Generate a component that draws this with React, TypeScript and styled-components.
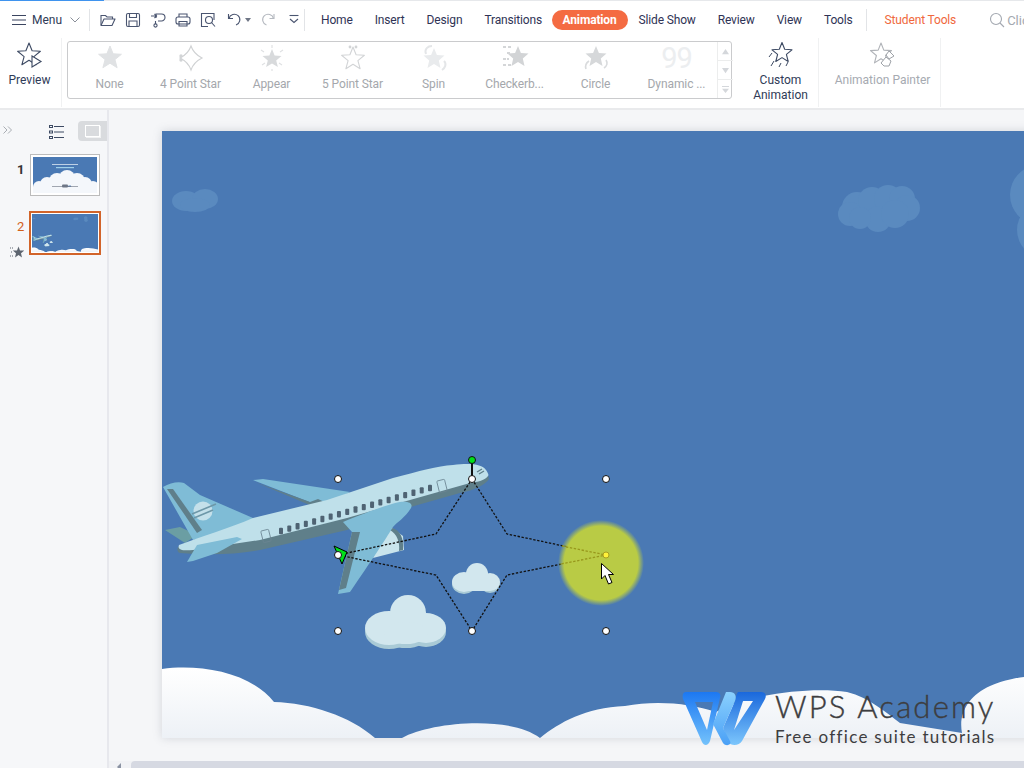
import React from 'react';
import styled, { createGlobalStyle } from 'styled-components';

const Global = createGlobalStyle`
  html, body { margin: 0; padding: 0; background: #f5f6f8; overflow: hidden; }
  #root { width: 1024px; height: 768px; }
`;

const Page = styled.div`
  width: 1024px; height: 768px; display: flex; flex-direction: column; overflow: hidden;
  font-family: Roboto, "Noto Sans", sans-serif; font-size: 12px; color: #2f3b57; background: #f5f6f8;
`;
const LoadStrip = styled.div`
  height: 2px; flex: none; background: linear-gradient(to right, #3f93ee 104px, #e6e8eb 104px);
  background-size: 100% 1px; background-repeat: no-repeat; background-color: #fff;
`;
const TopBar = styled.div`
  height: 36px; flex: none; background: #fff; display: flex; align-items: center; padding-left: 12px; white-space: nowrap;
  & > * { flex: none; }
`;
const MenuLabel = styled.span`
  margin-left: 6px; width: 38px; color: #2f3b57;
`;
const VRule = styled.div<{ $h?: number; $ml?: number; $mr?: number }>`
  width: 1px; height: ${p => p.$h ?? 22}px; background: #e2e4e7; flex: none;
  margin-left: ${p => p.$ml ?? 0}px; margin-right: ${p => p.$mr ?? 0}px;
`;
const QuickIcon = styled.svg<{ $w?: number; $mr?: number; $dim?: boolean }>`
  width: ${p => p.$w ?? 16}px; height: 16px; flex: none; margin-right: ${p => p.$mr ?? 9}px;
  fill: none; stroke: ${p => (p.$dim ? '#b5b9c0' : '#4a5570')}; stroke-width: 1.1;
`;
const UndoCaret = styled.svg`
  width: 8px; height: 4px; margin-right: 8px; fill: #6f7686;
`;
const Nav = styled.nav`
  display: flex; align-items: center; margin-left: 5px; letter-spacing: -0.15px;
`;
const NavItem = styled.span<{ $active?: boolean }>`
  height: 20px; line-height: 20px; border-radius: 10px; padding: 0 11px;
  margin-left: ${p => (p.$active ? -1.5 : 0)}px;
  background: ${p => (p.$active ? '#f46b42' : 'transparent')};
  color: ${p => (p.$active ? '#fff' : '#2f3355')}; font-weight: ${p => (p.$active ? 700 : 400)};
`;
const StudentTools = styled.span`
  color: #f0683c; margin-left: 18px; letter-spacing: -0.15px;
`;
const Search = styled.div`
  display: flex; align-items: center; gap: 2px; margin-left: 33px; color: #a3a8b0; font-size: 13px;
`;
const Ribbon = styled.div`
  height: 70px; flex: none; background: #fff; border-bottom: 2px solid #e9eaec; display: flex; align-items: stretch; box-sizing: content-box;
`;
const RibbonButton = styled.div<{ $w: number; $pl?: number; $pr?: number; $muted?: boolean }>`
  width: ${p => p.$w}px; flex: none; display: flex; flex-direction: column; align-items: center; text-align: center; line-height: 15px;
  color: ${p => (p.$muted ? '#a6aab1' : '#2f3b57')}; padding: 4px ${p => p.$pr ?? 0}px 0 ${p => p.$pl ?? 0}px; box-sizing: border-box; border-right: 1px solid #f0f1f2; height: 69px;
`;
const RibbonIcon = styled.svg`
  width: 28px; height: 28px; flex: none; margin-bottom: 3px;
`;
const Gallery = styled.div`
  width: 663px; height: 56px; flex: none; margin: 3px 5px 0 5px; border: 1px solid #cacbcd; border-radius: 3px; display: flex; background: #fff;
`;
const GalleryItems = styled.div`
  flex: 1; display: flex; padding-left: 1px; letter-spacing: -0.1px;
`;
const GalleryItem = styled.div`
  width: 81px; flex: none; display: flex; flex-direction: column; align-items: center; color: #a4a7ac; padding-top: 2px; line-height: 16px; white-space: nowrap;
`;
const GalleryIcon = styled.svg`
  width: 28px; height: 28px; flex: none; margin-bottom: 4px;
`;
const DynamicGlyph = styled.span`
  height: 28px; margin-bottom: 4px; font-size: 29px; line-height: 28px; color: #eceef0; letter-spacing: -1px;
`;
const GalleryScroll = styled.div`
  width: 15px; flex: none; border-left: 1px solid #eceded; display: flex; flex-direction: column;
`;
const ScrollCell = styled.div`
  flex: 1; display: flex; align-items: center; justify-content: center; border-bottom: 1px solid #eceded;
  &:last-child { border-bottom: none; }
`;
const Arrow = styled.svg`
  width: 7px; height: 7px; fill: #d4d7db;
`;
const Workspace = styled.div`
  flex: 1; display: flex; min-height: 0;
`;
const Sidebar = styled.aside`
  width: 107px; flex: none; border-right: 2px solid #e7e8ed; background: #f6f7f9; display: flex; flex-direction: column;
`;
const SideTabs = styled.div`
  height: 44px; flex: none; display: flex; align-items: flex-start; padding-top: 11px; box-sizing: border-box;
`;
const CollapseIcon = styled.svg`
  width: 10px; height: 8px; margin: 5px 0 0 3px; flex: none; fill: none; stroke: #a9adb3;
`;
const ListIcon = styled.svg`
  width: 15px; height: 14px; margin: 4px 0 0 36px; flex: none; fill: none; stroke: #3d4a63;
`;
const SideTab = styled.div`
  width: 30px; height: 20px; margin-left: 14px; background: #d9dbde; border-radius: 4px 0 0 4px; display: flex; align-items: center; justify-content: center;
`;
const TabFrame = styled.div`
  width: 13px; height: 10px; border: 1px solid #fff; box-shadow: 1px 1px 0 #f1f2f3;
`;
const ThumbRow = styled.div<{ $current?: boolean }>`
  position: relative; display: flex; height: ${p => (p.$current ? 44 : 42)}px; margin-bottom: ${p => (p.$current ? 0 : 15)}px;
  padding-left: ${p => (p.$current ? 29 : 30)}px;
`;
const ThumbNumber = styled.span<{ $current?: boolean }>`
  position: absolute; left: 17px; top: 7px; font-weight: ${p => (p.$current ? 400 : 700)}; font-size: 13px; line-height: 18px;
  color: ${p => (p.$current ? '#d2601a' : '#333')};
`;
const Thumb = styled.div<{ $current?: boolean }>`
  box-sizing: border-box; width: ${p => (p.$current ? 72 : 70)}px; height: 100%;
  border: ${p => (p.$current ? '2px solid #d2642a' : '1px solid #bcbcbc')};
  padding: ${p => (p.$current ? '1px' : '2px')}; background: #fff; display: flex;
`;
const ThumbSvg = styled.svg`
  width: 100%; height: 100%; display: block;
`;
const StarBadge = styled.svg`
  position: absolute; left: 10px; top: 34px; width: 14px; height: 14px;
`;
const Main = styled.main`
  flex: 1; min-width: 0; display: flex; flex-direction: column;
`;
const Stage = styled.div`
  flex: 1; min-height: 0; position: relative; overflow: hidden; padding: 21px 0 0 53px; background: #f5f6f8;
`;
const Slide = styled.svg`
  display: block; width: 1079px; height: 607px; box-shadow: 0 0 9px rgba(90, 100, 120, 0.22); background: #4a79b4;
`;
const Watermark = styled.div`
  position: absolute; left: 573px; top: 581px; width: 320px; height: 70px; display: flex; align-items: flex-start;
`;
const WmLogo = styled.svg`
  width: 84px; height: 60px; flex: none;
`;
const WmText = styled.div`
  margin-left: 9px; font-family: Lato, "Noto Sans", sans-serif; color: #3d3d40; display: flex; flex-direction: column;
`;
const WmTitle = styled.span`
  font-size: 31px; line-height: 30px; font-weight: 300; letter-spacing: 2.2px; white-space: nowrap; -webkit-text-stroke: 0.4px #3d3d40;
`;
const WmSub = styled.span`
  font-size: 17px; line-height: 22px; letter-spacing: 1.3px; white-space: nowrap; margin-top: 5px;
`;
const ScrollBar = styled.div`
  height: 7px; flex: none; background: #f1f2f5; display: flex; align-items: stretch; padding-left: 8px;
`;
const ScrollLeft = styled.div`
  width: 0; height: 0; margin-top: 2px; border-right: 4px solid #8b93a3; border-top: 4px solid transparent; border-bottom: 4px solid transparent;
`;
const ScrollThumb = styled.div`
  flex: 1; margin-left: 10px; background: #d6d9e2; border-radius: 4px 0 0 0;
`;

function starPts(cx: number, cy: number, R: number, r: number, n = 5) {
  const pts: string[] = [];
  for (let i = 0; i < n * 2; i++) {
    const a = -Math.PI / 2 + (i * Math.PI) / n;
    const rad = i % 2 ? r : R;
    pts.push(`${(cx + rad * Math.cos(a)).toFixed(1)},${(cy + rad * Math.sin(a)).toFixed(1)}`);
  }
  return pts.join(' ');
}

const Qi = {
  open: <><path d="M1 13V3.5h4.5l1.5 1.5h5.5v2" /><path d="M1 13.5h11l3-6.5H4z" strokeLinejoin="round" /></>,
  save: <><rect x="1.5" y="1.5" width="13" height="13" rx="1.5" /><path d="M4.5 1.5v4h7v-4M4 14.5V9h8v5.5" /></>,
  paste: <><path d="M1 4h5M4.5 2l2 2-2 2" /><path d="M6 6V2h5.5a3.5 3.5 0 0 1 0 7H8" /><circle cx="5.5" cy="13.5" r="1.6" /><path d="M5.5 9v3" /></>,
  print: <><path d="M4 5V2h8v3" /><rect x="1" y="5" width="14" height="7" rx="2" /><path d="M4 9.5h8V14H4z" /></>,
  preview: <><path d="M14 8V1.5H1.5v13H8" /><circle cx="9" cy="8" r="3.5" /><path d="M11.5 10.5L15 14.5" /></>,
  undo: <><path d="M1.5 2v4.5H6" /><path d="M2 6.5A5.5 5.5 0 1 1 9 13" /></>,
  redo: <><path d="M14 2v4.5H9.5" /><path d="M13.5 6.5A5.5 5.5 0 1 0 6.5 13" /></>,
  more: <><path d="M1.5 3.5h9" /><path d="M2 7l4 3.5L10 7" /></>,
};

function Scene({ overlay = false }: { overlay?: boolean }) {
  const winPts = Array.from({ length: 19 }, (_, i) => ({
    x: 281 + (i * 149) / 18,
    y: 531 - (i * 43) / 18,
  }));
  const gid = overlay ? 'm' : 't';
  return (
    <g transform="translate(-162 -131)">
      <defs>
        <linearGradient id={`snow${gid}`} x1="0" y1="0" x2="0" y2="1">
          <stop offset="0" stopColor="#ffffff" />
          <stop offset="1" stopColor="#edf1f6" />
        </linearGradient>
        <radialGradient id={`glow${gid}`}>
          <stop offset="0.86" stopColor="#b9cb45" stopOpacity="1" />
          <stop offset="1" stopColor="#b9cb45" stopOpacity="0" />
        </radialGradient>
      </defs>
      <rect x="162" y="131" width="1079" height="607" fill="#4a79b4" />
      <g fill="#5a8abf">
        <ellipse cx="186" cy="201" rx="14" ry="10" /><ellipse cx="205" cy="199" rx="13" ry="10" /><ellipse cx="195" cy="205" rx="15" ry="7" />
        <circle cx="857" cy="207" r="15" /><circle cx="872" cy="201" r="14" /><circle cx="888" cy="199" r="14" /><circle cx="902" cy="199" r="13" /><circle cx="907" cy="208" r="13" /><circle cx="878" cy="219" r="13" /><circle cx="895" cy="214" r="14" /><circle cx="850" cy="214" r="12" /><circle cx="860" cy="218" r="11" />
        <circle cx="1040" cy="195" r="30" /><circle cx="1045" cy="230" r="28" />
      </g>
      <path fill={`url(#snow${gid})`} d="M162 669 C200 664 250 672 274 702 C310 703 350 716 375 738 H402 C430 722 510 715 540 738 C560 722 585 708 625 706 C655 700 690 703 716 712 C745 695 810 686 847 692 C870 698 885 712 900 723 L962 733 C958 712 970 695 990 686 C1005 680 1015 678 1024 677 C1100 665 1180 680 1241 700 V738 H162 Z" />

      {/* big cloud */}
      <g fill="#a9cad6" transform="translate(0 4)">
        <ellipse cx="389" cy="628" rx="24" ry="17" /><circle cx="408" cy="613" r="18" /><ellipse cx="426" cy="628" rx="20" ry="15" /><ellipse cx="406" cy="633" rx="22" ry="11" />
      </g>
      <g fill="#d2e7ee">
        <ellipse cx="389" cy="628" rx="24" ry="17" /><circle cx="408" cy="613" r="18" /><ellipse cx="426" cy="628" rx="20" ry="15" /><ellipse cx="406" cy="633" rx="22" ry="11" />
      </g>
      {/* small cloud */}
      <g fill="#a9cad6" transform="translate(0 2)">
        <ellipse cx="464" cy="582" rx="12" ry="10" /><circle cx="477" cy="574" r="11" /><ellipse cx="490" cy="582" rx="10" ry="9" />
      </g>
      <g fill="#d2e7ee">
        <ellipse cx="464" cy="582" rx="12" ry="10" /><circle cx="477" cy="574" r="11" /><ellipse cx="490" cy="582" rx="10" ry="9" /><rect x="464" y="578" width="26" height="13" />
      </g>

      {/* airplane */}
      <path fill="#7fbcd6" d="M253 480 L263 479 L350 492 L325 505 L312 503 Z" />
      <path fill="#5f7f8a" d="M255 482 L310 502 L318 499 L335 507 L312 506 Z" />
      <path fill="#6b9ea3" d="M165 530 L180 527 L197 535 L185 543 Z" />
      <path fill="#7fbcd6" d="M163 487 C170 483 178 481 184 483 L200 495 L253 518 L262 525 L193 540 Z" />
      <path fill="#5f7f8a" d="M167 489 L173 489 L202 530 L197 533 Z" />
      <circle cx="203" cy="511" r="9.5" fill="#c4e0ea" />
      <path d="M192 514 L216 504 M194 518 L213 510" stroke="#6d97a8" strokeWidth="1.6" />
      <path fill="#c9e4ec" d="M392 528 L403 536 L404 550 L373 558 L385 530 Z" />
      <path fill="#5f7f8a" d="M392 528 C400 530 404 538 403 550 L399 551 C400 542 397 534 390 530 Z" />
      <path fill="#5f7f8a" d="M178 547 L453 465 L488 475 L489 479 C485 485 475 490 460 493 L393 512 L347 530 L260 550 C235 555 205 555 180 553 C177 552 177 549 178 547 Z" />
      <path fill="#bfe0ea" d="M179 545 C200 537 230 528 253 518 L327 500 L393 478 C420 471 437 466 453 465 C470 463 482 464 486 470 C488 473 489 475 488 476 C485 480 478 482 470 483 L410 500 L347 518 L260 540 L193 550 C183 551 177 550 179 545 Z" />
      <g fill="#4f6373">
        {winPts.map((w, i) => (
          <rect key={i} x={w.x - 2} y={w.y - 3.2} width="4" height="6.4" rx="1" />
        ))}
      </g>
      <g fill="none" stroke="#6b8492" strokeWidth="0.8">
        <rect x="262" y="530" width="8" height="12" rx="1" transform="rotate(-14 266 536)" />
        <rect x="438" y="480" width="8" height="12" rx="1" transform="rotate(-14 442 486)" />
      </g>
      <path d="M477 472 L482 469 M479 474 L484 471" stroke="#5f7f8a" strokeWidth="1.4" />
      <path fill="#7fbcd6" d="M187 562 L197 545 L237 537 L242 539 L217 553 L193 561 Z" />
      <path fill="#7fbcd6" d="M343 522 C360 515 385 505 400 502 C410 501 413 504 411 508 C405 518 397 522 393 527 C385 540 372 560 350 592 L338 594 L352 532 Z" />
      <path fill="#5f7f8a" d="M352 532 L360 532 L346 588 L339 590 Z" />

      {overlay && (
        <>
          <path d="M472 460 V479" stroke="#111" strokeWidth="2" />
          <path d="M472 479 L507 534 L606 555 L507 575 L472 631 L436 575 L338 555 L436 534 Z" fill="none" stroke="#111" strokeWidth="1.3" strokeDasharray="2.4 1.6" />
          <circle cx="601" cy="563" r="43" fill={`url(#glow${gid})`} />
          <path d="M562 546 L606 555 L561 564" fill="none" stroke="#98971c" strokeWidth="1.3" strokeDasharray="2.4 1.6" />
          <path d="M334 546 L347 552 L342 564 Z" fill="#00e01a" stroke="#000" strokeWidth="1" strokeLinejoin="round" />
          <g fill="#fff" stroke="#111" strokeWidth="1">
            <circle cx="338" cy="479" r="3.5" /><circle cx="606" cy="479" r="3.5" /><circle cx="606" cy="631" r="3.5" /><circle cx="338" cy="631" r="3.5" /><circle cx="472" cy="631" r="3.5" /><circle cx="472" cy="479" r="3.5" /><circle cx="338" cy="555" r="3.5" />
          </g>
          <circle cx="472" cy="460" r="3.5" fill="#00e01a" stroke="#111" strokeWidth="1" />
          <circle cx="606" cy="555" r="3" fill="#fff23a" stroke="#a89f20" strokeWidth="1" />
          <path d="M601.5 563.5 V579 L605 575.5 L608.5 584 L612 582.5 L608.5 574.5 L613.5 574.5 Z" fill="#fff" stroke="#000" strokeWidth="1" strokeLinejoin="round" />
        </>
      )}
    </g>
  );
}

const galleryItems: { label: string; icon: React.ReactNode }[] = [
  { label: 'None', icon: <polygon points={starPts(14, 14, 12, 5.2)} fill="#e0e2e4" stroke="#e0e2e4" strokeLinejoin="round" /> },
  { label: '4 Point Star', icon: <><path d="M14 2 C16 8 19 11 25 14 C19 17 16 20 14 26 C12 20 9 17 3 14 C9 11 12 8 14 2Z" fill="none" stroke="#cfd1d3" strokeWidth="1.1" /><circle cx="4" cy="12" r="1.7" fill="#d2d4d6" /><circle cx="4" cy="16" r="1.7" fill="#d2d4d6" /></> },
  { label: 'Appear', icon: <><polygon points={starPts(14, 15, 10, 4.4)} fill="#d8dadc" /><path d="M14 1v3M3 6l3 2M25 6l-3 2M4 21l3-2M24 21l-3-2M14 25v2" stroke="#dfe1e3" strokeWidth="1.2" /></> },
  { label: '5 Point Star', icon: <><polygon points={starPts(14, 15, 12, 5.2)} fill="none" stroke="#d2d4d6" strokeWidth="1.1" strokeLinejoin="round" /><circle cx="11" cy="3" r="1.4" fill="#d2d4d6" /><circle cx="17" cy="3" r="1.4" fill="#d2d4d6" /></> },
  { label: 'Spin', icon: <><polygon points={starPts(14, 15, 11, 5)} fill="#e9ebed" /><path d="M6 10C4 5 8 2 12 2M24 17c3 3 1 7-2 9" fill="none" stroke="#e4e6e8" strokeWidth="2" /></> },
  { label: 'Checkerb...', icon: <><polygon points={starPts(17, 13, 11, 5)} fill="#d2d4d6" /><g fill="#d4d6d8"><rect x="2" y="2" width="3" height="2" /><rect x="7" y="2" width="3" height="2" /><rect x="6" y="8" width="3" height="2" /><rect x="2" y="14" width="3" height="2" /><rect x="2" y="20" width="3" height="2" /><rect x="7" y="20" width="3" height="2" /><rect x="6" y="14" width="2" height="2" /></g></> },
  { label: 'Circle', icon: <><polygon points={starPts(14, 13, 11, 5)} fill="#d6d8da" /><path d="M4 25c-1-3 0-6 3-8M24 16c2 3 1 6-2 8" fill="none" stroke="#d9dbdd" strokeWidth="1.6" /></> },
];

export default function App() {
  const nav = ['Home', 'Insert', 'Design', 'Transitions', 'Animation', 'Slide Show', 'Review', 'View', 'Tools'];
  return (
    <Page>
      <Global />
      <LoadStrip />
      <TopBar>
        <svg width="14" height="10" viewBox="0 0 14 10" fill="none" stroke="#3b4560" strokeWidth="1"><path d="M0 .5h14M0 5h14M0 9.5h14" /></svg>
        <MenuLabel>Menu</MenuLabel>
        <svg width="10" height="6" viewBox="0 0 10 6" fill="none" stroke="#8a8f99"><path d="M.5.5L5 5 9.5.5" /></svg>
        <VRule $ml={9} $mr={10} />
        <QuickIcon viewBox="0 0 16 16">{Qi.open}</QuickIcon>
        <QuickIcon viewBox="0 0 16 16">{Qi.save}</QuickIcon>
        <QuickIcon viewBox="0 0 16 16">{Qi.paste}</QuickIcon>
        <QuickIcon viewBox="0 0 16 16">{Qi.print}</QuickIcon>
        <QuickIcon viewBox="0 0 16 16" $mr={11}>{Qi.preview}</QuickIcon>
        <QuickIcon viewBox="0 0 16 16" $mr={1}>{Qi.undo}</QuickIcon>
        <UndoCaret viewBox="0 0 8 4"><path d="M1 0h6L4 4z" /></UndoCaret>
        <QuickIcon viewBox="0 0 16 16" $mr={12} $dim>{Qi.redo}</QuickIcon>
        <QuickIcon viewBox="0 0 12 16" $w={12} $mr={2}>{Qi.more}</QuickIcon>
        <VRule $ml={2} />
        <Nav>
          {nav.map(n => (
            <NavItem key={n} $active={n === 'Animation'}>{n}</NavItem>
          ))}
        </Nav>
        <VRule $ml={2} />
        <StudentTools>Student Tools</StudentTools>
        <Search>
          <svg width="16" height="16" viewBox="0 0 16 16" fill="none" stroke="#a3a8b0" strokeWidth="1.1"><circle cx="7" cy="7" r="5.5" /><path d="M11 11l4 4" /></svg>
          Click
        </Search>
      </TopBar>
      <Ribbon>
        <RibbonButton $w={62} $pr={2}>
          <RibbonIcon viewBox="0 0 28 28">
            <polygon points={starPts(13, 13, 12, 5.2)} fill="none" stroke="#3d4a63" strokeWidth="1.1" strokeLinejoin="round" />
            <path d="M16 14l9 5.5-9 5.5z" fill="#fff" stroke="#3d4a63" strokeWidth="1.1" />
          </RibbonIcon>
          Preview
        </RibbonButton>
        <Gallery>
          <GalleryItems>
            {galleryItems.map(g => (
              <GalleryItem key={g.label}>
                <GalleryIcon viewBox="0 0 28 28">{g.icon}</GalleryIcon>
                {g.label}
              </GalleryItem>
            ))}
            <GalleryItem>
              <DynamicGlyph>99</DynamicGlyph>
              Dynamic ...
            </GalleryItem>
          </GalleryItems>
          <GalleryScroll>
            <ScrollCell><Arrow viewBox="0 0 8 8"><path d="M4 1l4 6H0z" /></Arrow></ScrollCell>
            <ScrollCell><Arrow viewBox="0 0 8 8"><path d="M4 7L0 1h8z" /></Arrow></ScrollCell>
            <ScrollCell><Arrow viewBox="0 0 8 8"><path d="M0 0h8v1H0zM4 8L0 3h8z" /></Arrow></ScrollCell>
          </GalleryScroll>
        </Gallery>
        <RibbonButton $w={82} $pl={6}>
          <RibbonIcon viewBox="0 0 28 28">
            <polygon points={starPts(15, 11, 10.5, 4.6)} fill="none" stroke="#3d4a63" strokeWidth="1.1" strokeLinejoin="round" />
            <path d="M5 11L2 15M7 19L4 24M14 21l-2 4M21 20l-2 4" stroke="#3d4a63" strokeWidth="1" />
          </RibbonIcon>
          Custom<br />Animation
        </RibbonButton>
        <RibbonButton $w={122} $pl={6} $muted>
          <RibbonIcon viewBox="0 0 28 28">
            <polygon points={starPts(12, 12, 11, 4.8)} fill="none" stroke="#b0b3b8" strokeWidth="1.1" strokeLinejoin="round" />
            <path d="M20 9l5 5-5 3-3-4zM17 15l5 4-2 5h-5l-3-3z" fill="#fff" stroke="#9ea2a8" strokeWidth="1" />
          </RibbonIcon>
          Animation Painter
        </RibbonButton>
      </Ribbon>
      <Workspace>
        <Sidebar>
          <SideTabs>
            <CollapseIcon viewBox="0 0 10 8"><path d="M.5.5L4 4 .5 7.5M5 .5L8.5 4 5 7.5" /></CollapseIcon>
            <ListIcon viewBox="0 0 15 14"><path d="M5 1.5h10M5 7h10M5 12.5h10" /><rect x=".5" y=".5" width="3" height="2" /><rect x=".5" y="6" width="3" height="2" /><rect x=".5" y="11.5" width="3" height="2" /></ListIcon>
            <SideTab><TabFrame /></SideTab>
          </SideTabs>
          <ThumbRow>
            <ThumbNumber>1</ThumbNumber>
            <Thumb>
              <ThumbSvg viewBox="0 0 64 36" preserveAspectRatio="none">
                <rect width="64" height="36" fill="#4a79b4" />
                <rect x="19" y="7" width="26" height="0.8" fill="#dbe6f2" />
                <rect x="23" y="10" width="18" height="1.2" fill="#9fd0ea" />
                <g fill="#f4f7fb">
                  <circle cx="6" cy="30" r="6" /><circle cx="14" cy="27" r="7" /><circle cx="24" cy="24" r="8" /><circle cx="34" cy="21" r="8" /><circle cx="44" cy="24" r="8" /><circle cx="52" cy="27" r="7" /><circle cx="60" cy="30" r="6" /><rect x="0" y="30" width="64" height="6" />
                </g>
                <rect x="19" y="29" width="26" height="0.7" fill="#7b8390" />
                <rect x="29" y="27.5" width="6" height="3" rx="1" fill="#6d7686" />
              </ThumbSvg>
            </Thumb>
          </ThumbRow>
          <ThumbRow $current>
            <ThumbNumber $current>2</ThumbNumber>
            <Thumb $current>
              <ThumbSvg viewBox="0 0 1079 607" preserveAspectRatio="none"><Scene /></ThumbSvg>
            </Thumb>
            <StarBadge viewBox="0 0 14 14">
              <polygon points={starPts(8.5, 7.5, 6, 2.6)} fill="#5d6570" />
              <path d="M0 3h3M1 7h2M0 11h3" stroke="#5d6570" strokeWidth="1" strokeDasharray="1 1" />
            </StarBadge>
          </ThumbRow>
        </Sidebar>
        <Main>
          <Stage>
            <Slide viewBox="0 0 1079 607"><Scene overlay /></Slide>
            <Watermark>
              <WmLogo viewBox="0 0 84 60">
                <defs>
                  <linearGradient id="wmA" x1="0" y1="0" x2="0" y2="1">
                    <stop offset="0" stopColor="#1c78f2" />
                    <stop offset="1" stopColor="#74c2fb" />
                  </linearGradient>
                  <linearGradient id="wmR" x1="0" y1="0" x2="0" y2="1">
                    <stop offset="0" stopColor="#1a68dc" />
                    <stop offset="1" stopColor="#7cc6fc" />
                  </linearGradient>
                  <linearGradient id="wmB" x1="0" y1="0" x2="0" y2="1">
                    <stop offset="0" stopColor="#8ad0fd" />
                    <stop offset="1" stopColor="#4aa0f6" />
                  </linearGradient>
                </defs>
                <path fill="url(#wmR)" fillRule="evenodd" d="M56 1 H79 C83 1 85 4 83 8 L60 50 C57 55 49 55 46 51 L41 37 L53 10 C54 6 54 3 56 1 Z M61 10 L52 39 L71 10 Z" />
                <path fill="url(#wmA)" fillRule="evenodd" d="M4 1 H34 C38 1 39 4 38 7 L28 50 C26 55 22 55 20 51 L1 8 C0 4 1 1 4 1 Z M13 11 L25 39 L31 11 Z" />
                <path fill="url(#wmB)" d="M44 1 H48 C53 1 55 5 53 10 L41 37 L48 50 C50 54 44 56 41 52 L31 33 Z" />
              </WmLogo>
              <WmText>
                <WmTitle>WPS Academy</WmTitle>
                <WmSub>Free office suite tutorials</WmSub>
              </WmText>
            </Watermark>
          </Stage>
          <ScrollBar>
            <ScrollLeft />
            <ScrollThumb />
          </ScrollBar>
        </Main>
      </Workspace>
    </Page>
  );
}
